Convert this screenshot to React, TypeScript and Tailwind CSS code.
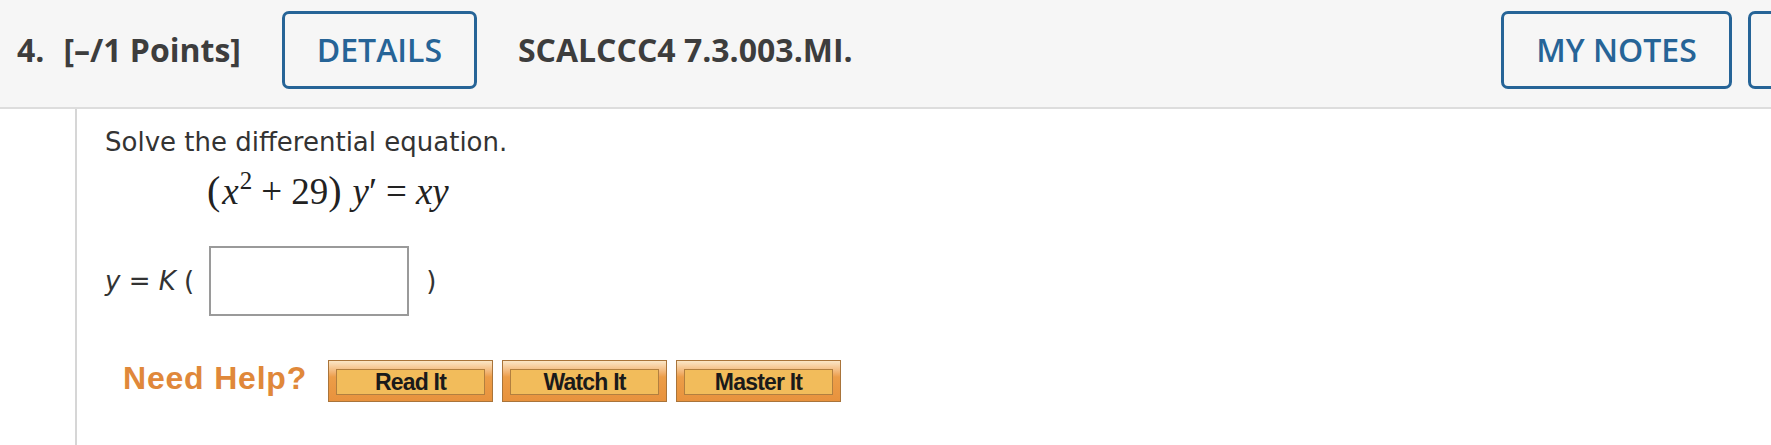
import React from "react";

function HelpButton({ label }: { label: string }) {
  return (
    <div className="w-[165px] h-[42px] shrink-0 border border-[#a9743a] bg-linear-to-b from-[#fbe6c6] via-[#ec9d48] via-40% to-[#e8923d] pt-[8px] pb-[6px] px-[7px]">
      <div className="w-full h-full border border-[#b27f3f] bg-[#f2bc5b] flex items-center justify-center">
        <span className="font-['Liberation_Sans',Arial,sans-serif] font-bold text-[23px] tracking-[-0.8px] text-[#1a1a1a] leading-none">
          {label}
        </span>
      </div>
    </div>
  );
}

export default function App() {
  return (
    <div className="w-[1771px] h-[445px] bg-white overflow-hidden">
      {/* Header */}
      <div className="h-[109px] bg-[#f6f6f6] border-b-2 border-[#dddddd] flex items-start pt-[11px] pl-[17px] overflow-hidden font-['Open_Sans',sans-serif]">
        <div className="h-[78px] flex items-center shrink-0 text-[32px] font-bold text-[#3d3d3d]">
          <span>4.</span>
          <span className="ml-[19px]">[–/1 Points]</span>
        </div>
        <div className="ml-[41px] w-[195px] h-[78px] shrink-0 border-[3px] border-[#266497] rounded-[7px] flex items-center justify-center text-[32px] font-semibold text-[#266497]">
          DETAILS
        </div>
        <div className="ml-[41px] h-[78px] flex items-center shrink-0 text-[32px] font-bold text-[#3d3d3d]">
          SCALCCC4 7.3.003.MI.
        </div>
        <div className="ml-auto w-[231px] h-[78px] shrink-0 border-[3px] border-[#266497] rounded-[7px] flex items-center justify-center text-[32px] font-semibold text-[#266497]">
          MY NOTES
        </div>
        <div className="ml-[16px] mr-[-177px] w-[200px] h-[78px] shrink-0 border-[3px] border-[#266497] rounded-[7px]" />
      </div>

      {/* Body */}
      <div className="flex h-[336px]">
        <div className="w-[77px] shrink-0 border-r-2 border-[#d6d6d6]" />
        <div className="pl-[28px] flex flex-col items-start font-['DejaVu_Sans',Verdana,sans-serif] text-[#333]">
          <div className="mt-[18px] text-[26px] leading-[30px]">Solve the differential equation.</div>
          <div className="mt-[14px] ml-[102px] h-[40px] flex items-baseline font-['Liberation_Serif',serif] text-[37px] leading-[40px] text-[#222] whitespace-nowrap">
            <span className="text-[40px] leading-[40px] font-light">(</span>
            <span className="italic ml-[2px]">x</span>
            <span className="text-[25px] leading-[40px] relative top-[-15px] ml-[1px]">2</span>
            <span className="ml-[9px]">+</span>
            <span className="ml-[9px]">29</span>
            <span className="text-[40px] leading-[40px]">)</span>
            <span className="italic ml-[11px]">y</span>
            <span>′</span>
            <span className="ml-[9px]">=</span>
            <span className="italic ml-[9px]">x</span>
            <span className="italic">y</span>
          </div>
          <div className="mt-[35px] flex items-center text-[26px] leading-[30px]">
            <span>
              <span className="italic">y</span> = <span className="italic">K</span> (
            </span>
            <div className="ml-[15px] w-[200px] h-[70px] border-2 border-[#9a9a9a] bg-white" />
            <span className="ml-[17px]">)</span>
          </div>
          <div className="mt-[44px] flex items-center">
            <span className="ml-[18px] font-['Liberation_Sans',Arial,sans-serif] font-bold text-[32px] tracking-[0.8px] text-[#e0883a] leading-none relative top-[-3px]">
              Need Help?
            </span>
            <div className="ml-[21px] flex gap-[9px]">
              <HelpButton label="Read It" />
              <HelpButton label="Watch It" />
              <HelpButton label="Master It" />
            </div>
          </div>
        </div>
      </div>
    </div>
  );
}
